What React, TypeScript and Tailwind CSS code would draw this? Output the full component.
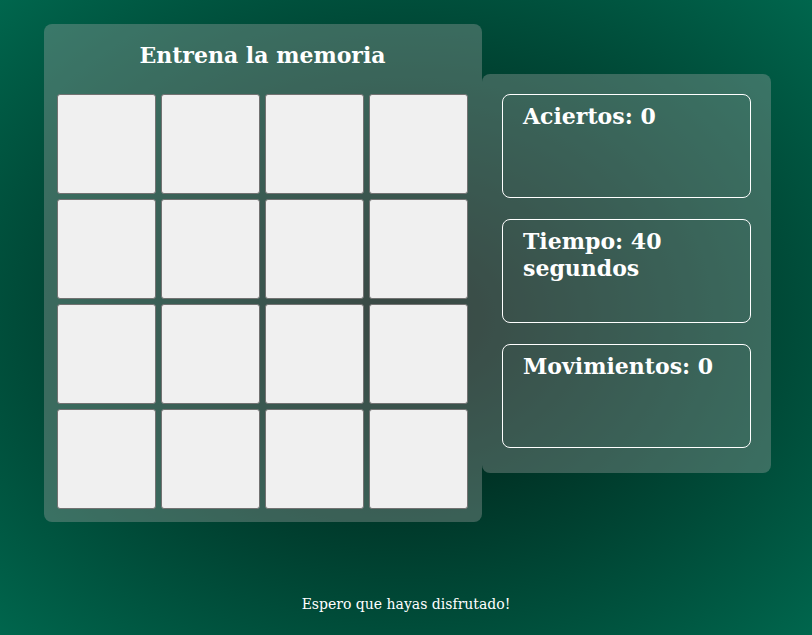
import React from "react";

const serif = { fontFamily: '"DejaVu Serif", Georgia, serif' };

export default function App() {
  const cards = Array.from({ length: 16 });
  return (
    <div
      className="w-full h-screen min-h-[635px] flex flex-col items-center bg-[radial-gradient(ellipse_at_center,#00140e_0%,#00664d_100%)] text-white"
      style={serif}
    >
      <div className="flex items-center pt-[24px] pl-[3px]">
        <div className="w-[438px] rounded-[8px] bg-[rgba(175,175,175,0.33)] pt-[16px] pb-[13px] pl-[13px] pr-[14px]">
          <h1 className="text-center text-[22px] leading-[30px] font-bold mb-[24px]">
            Entrena la memoria
          </h1>
          <div className="grid grid-cols-[repeat(4,99px)] auto-rows-[100px] gap-[5px]">
            {cards.map((_, i) => (
              <div
                key={i}
                className="bg-[#f0f0f0] border border-[#727272] rounded-[3px]"
              />
            ))}
          </div>
        </div>
        <div className="w-[289px] h-[399px] rounded-[8px] bg-[rgba(175,175,175,0.33)] pt-[20px] px-[20px] flex flex-col gap-[21px]">
          {["Aciertos: 0", "Tiempo: 40 segundos", "Movimientos: 0"].map((t) => (
            <div
              key={t}
              className="h-[104px] border border-white rounded-[8px] pt-[8px] pl-[20px] pr-[20px]"
            >
              <h2 className="text-[22px] leading-[27px] font-bold">{t}</h2>
            </div>
          ))}
        </div>
      </div>
      <p className="mt-[72px] text-[14px] leading-[20px]">Espero que hayas disfrutado!</p>
    </div>
  );
}
